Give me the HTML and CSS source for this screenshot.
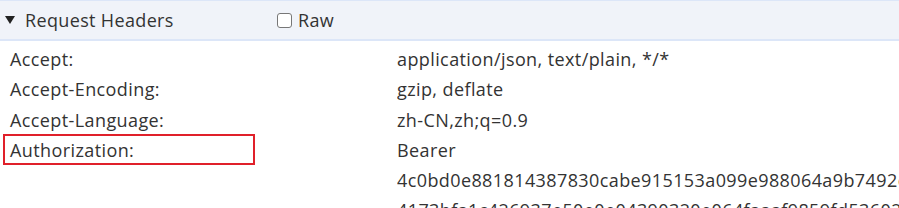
FILE: index.html
```html
<!DOCTYPE html>
<html>
<head>
<meta charset="utf-8">
<link rel="stylesheet" href="styles.css">
</head>
<body>
<div class="panel">
  <div class="section-header">
    <span class="title"><span class="caret"></span>Request Headers</span>
    <label class="raw"><span class="box"></span>Raw</label>
  </div>
  <div class="rows">
    <div class="row"><div class="key">Accept:</div><div class="val">application/json, text/plain, */*</div></div>
    <div class="row"><div class="key">Accept-Encoding:</div><div class="val">gzip, deflate</div></div>
    <div class="row"><div class="key">Accept-Language:</div><div class="val">zh-CN,zh;q=0.9</div></div>
    <div class="row"><div class="key"><span class="highlight">Authorization:</span></div><div class="val">Bearer<br>4c0bd0e881814387830cabe915153a099e988064a9b7492e<br>4173bfa1c426937e50e0e04390320e064faaaf9859fd53602</div></div>
  </div>
</div>
</body>
</html>
```
FILE: styles.css
```css
html, body { margin: 0; padding: 0; background: #fff; overflow: hidden; }
body { width: 899px; height: 208px; font-family: "Open Sans", "Noto Sans", sans-serif; color: #333; letter-spacing: 0.4px; }
.panel { width: 899px; }
.section-header {
  height: 38px;
  background: #f0f3f9;
  border-top: 1px solid #dce6f8;
  border-bottom: 2px solid #dce6f8;
  display: flex;
  align-items: center;
  font-size: 18px;
  letter-spacing: 0.35px;
}
.title { width: 277px; padding-left: 5px; box-sizing: border-box; display: flex; align-items: center; }
.caret {
  width: 0; height: 0;
  border-left: 5px solid transparent;
  border-right: 5px solid transparent;
  border-top: 8px solid #222;
  margin-right: 10px;
}
.raw { display: flex; align-items: center; }
.box { width: 13px; height: 13px; border: 1px solid #777; border-radius: 3px; background: #fff; margin-right: 6px; }
.rows { padding-top: 3px; font-size: 18px; line-height: 30.25px; }
.row { display: flex; }
.key { width: 397px; padding-left: 10px; box-sizing: border-box; flex: none; }
.val { white-space: nowrap; overflow: hidden; }
.highlight { display: inline-block; position: relative; }
.highlight::after {
  content: ""; position: absolute; left: -7px; top: -1px; width: 252px; height: 31px;
  border: 2px solid #e0202a; box-sizing: border-box;
}
```
